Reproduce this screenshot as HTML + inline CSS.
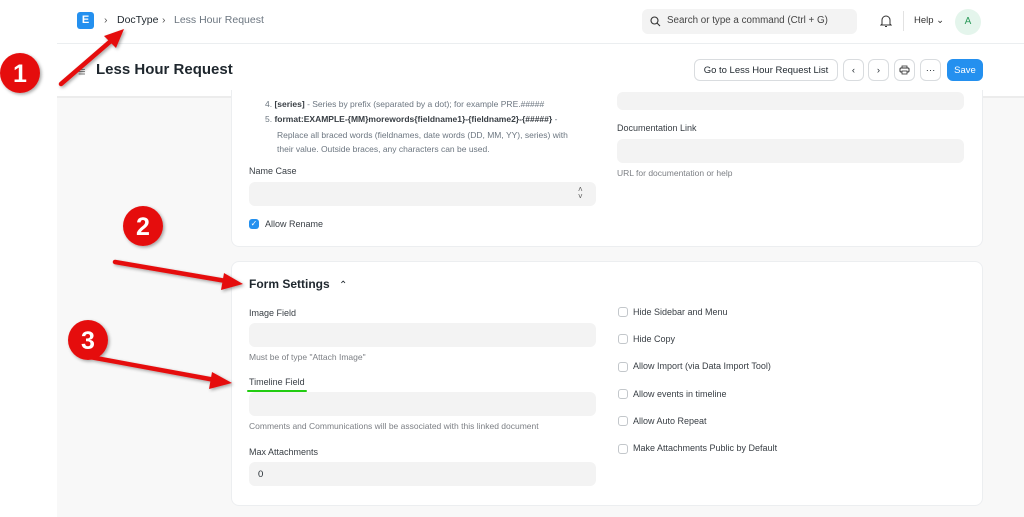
<!DOCTYPE html>
<html><head><meta charset="utf-8"><style>
*{box-sizing:border-box;margin:0;padding:0}
body{width:1024px;height:517px;overflow:hidden;background:#fff;font-family:"Liberation Sans",sans-serif;position:relative;color:#1f272e}
.abs{position:absolute}
.gray{left:57px;top:97px;width:967px;height:420px;background:#f8f8f8}
.hdr{left:57px;top:0;width:967px;height:44px;border-bottom:1px solid #ebeef0;background:#fff}
.card{background:#fff;border-radius:8px;border:1px solid #eceef0;position:absolute}
.lbl{font-size:9px;color:#383e44;position:absolute}
.inp{background:#f3f3f3;border-radius:6px;position:absolute}
.hint{font-size:8.5px;color:#7c7f84;position:absolute}
.cb{position:absolute;width:10px;height:10px;border:1px solid #c3c7cb;border-radius:3px;background:#fff}
.btn{position:absolute;top:59px;height:22px;border:1px solid #d9dcdf;border-radius:6px;background:#fff;font-size:9.5px;display:flex;align-items:center;justify-content:center;color:#1f272e}
</style></head><body>
<div class="abs gray"></div>
<div class="abs hdr"></div>
<div class="abs" style="left:77px;top:12px;width:17px;height:17px;background:#2490ef;border-radius:3px;color:#fff;font-weight:bold;font-size:11px;text-align:center;line-height:17px">E</div>
<div class="abs" style="left:104px;top:14px;font-size:10.5px;color:#555">›</div>
<div class="abs" style="left:117px;top:14px;font-size:10.5px;color:#1f272e">DocType</div>
<div class="abs" style="left:162px;top:14px;font-size:10.5px;color:#555">›</div>
<div class="abs" style="left:174px;top:14px;font-size:10.5px;color:#6c7680">Less Hour Request</div>
<div class="abs" style="left:642px;top:9px;width:215px;height:25px;background:#f3f3f3;border-radius:6px"></div>
<svg class="abs" style="left:650px;top:16px" width="11" height="11" viewBox="0 0 11 11"><circle cx="4.5" cy="4.5" r="3.5" fill="none" stroke="#333" stroke-width="1.1"/><path d="M7 7l3 3" stroke="#333" stroke-width="1.1"/></svg>
<div class="abs" style="left:667px;top:15px;font-size:9.8px;color:#444">Search or type a command (Ctrl + G)</div>
<svg class="abs" style="left:880px;top:14px" width="12" height="14" viewBox="0 0 12 14"><path d="M2 10V6a4 4 0 018 0v4l1 1H1z M5 12.5h2" fill="none" stroke="#333" stroke-width="1"/></svg>
<div class="abs" style="left:903px;top:11px;width:1px;height:20px;background:#e2e2e2"></div>
<div class="abs" style="left:914px;top:15px;font-size:9.5px;color:#333">Help ⌄</div>
<div class="abs" style="left:955px;top:9px;width:26px;height:26px;border-radius:50%;background:#e4f5ec;color:#2b9a5a;font-size:10px;text-align:center;line-height:26px">A</div>
<div class="abs" style="left:78px;top:64px;font-size:13px;color:#777">≡</div>
<div class="abs" style="left:96px;top:61px;font-size:15px;font-weight:bold;color:#1f272e">Less Hour Request</div>
<div class="btn" style="left:694px;width:144px">Go to Less Hour Request List</div>
<div class="btn" style="left:843px;width:21px">‹</div>
<div class="btn" style="left:868px;width:21px">›</div>
<div class="btn" style="left:894px;width:21px"><svg width="11" height="10" viewBox="0 0 11 10"><rect x="1" y="3" width="9" height="4" rx="1" fill="none" stroke="#333"/><rect x="3" y="1" width="5" height="2" fill="none" stroke="#333" stroke-width=".8"/><rect x="3" y="6" width="5" height="3" fill="#fff" stroke="#333" stroke-width=".8"/></svg></div>
<div class="btn" style="left:920px;width:21px">···</div>
<div class="btn" style="left:947px;width:36px;background:#2490ef;border-color:#2490ef;color:#fff">Save</div>
<div class="abs" style="left:57px;top:96px;width:967px;height:2px;background:#ececec"></div>

<div class="card" style="left:231px;top:90px;width:752px;height:157px;border-top:none;border-radius:0 0 8px 8px"></div>
<div class="abs" style="left:265px;top:99px;font-size:8.5px;color:#6c7680">4. <b style="color:#383e44">[series]</b> - Series by prefix (separated by a dot); for example PRE.#####</div>
<div class="abs" style="left:265px;top:114px;font-size:8.5px;color:#6c7680">5. <b style="color:#383e44">format:EXAMPLE-{MM}morewords{fieldname1}-{fieldname2}-{#####}</b> -</div>
<div class="abs" style="left:277px;top:128px;font-size:8.5px;color:#6c7680;line-height:14px">Replace all braced words (fieldnames, date words (DD, MM, YY), series) with<br>their value. Outside braces, any characters can be used.</div>
<div class="lbl" style="left:249px;top:166px">Name Case</div>
<div class="inp" style="left:249px;top:182px;width:347px;height:24px"></div>
<div class="abs" style="left:578px;top:186px;font-size:8px;color:#555;line-height:7px">˄<br>˅</div>
<div class="abs" style="left:249px;top:219px;width:10px;height:10px;border-radius:3px;background:#2490ef;color:#fff;font-size:8px;text-align:center;line-height:10px">✓</div>
<div class="lbl" style="left:265px;top:219px">Allow Rename</div>
<div class="inp" style="left:617px;top:92px;width:347px;height:18px"></div>
<div class="lbl" style="left:617px;top:123px">Documentation Link</div>
<div class="inp" style="left:617px;top:139px;width:347px;height:24px"></div>
<div class="hint" style="left:617px;top:168px">URL for documentation or help</div>

<div class="card" style="left:231px;top:261px;width:752px;height:245px"></div>
<div class="abs" style="left:249px;top:277px;font-size:12px;font-weight:bold;color:#1f272e">Form Settings <span style="font-weight:normal;font-size:10px;margin-left:6px">⌃</span></div>
<div class="lbl" style="left:249px;top:308px">Image Field</div>
<div class="inp" style="left:249px;top:323px;width:347px;height:24px"></div>
<div class="hint" style="left:249px;top:352px">Must be of type "Attach Image"</div>
<div class="lbl" style="left:249px;top:377px">Timeline Field</div>
<div class="abs" style="left:247px;top:390px;width:60px;height:2px;background:#22cc11;border-radius:1px"></div>
<div class="inp" style="left:249px;top:392px;width:347px;height:24px"></div>
<div class="hint" style="left:249px;top:421px">Comments and Communications will be associated with this linked document</div>
<div class="lbl" style="left:249px;top:447px">Max Attachments</div>
<div class="inp" style="left:249px;top:462px;width:347px;height:24px;font-size:9.5px;padding:7px 9px">0</div>

<div class="cb" style="left:618px;top:307px"></div><div class="lbl" style="left:633px;top:307px">Hide Sidebar and Menu</div>
<div class="cb" style="left:618px;top:334px"></div><div class="lbl" style="left:633px;top:334px">Hide Copy</div>
<div class="cb" style="left:618px;top:362px"></div><div class="lbl" style="left:633px;top:361px">Allow Import (via Data Import Tool)</div>
<div class="cb" style="left:618px;top:389px"></div><div class="lbl" style="left:633px;top:389px">Allow events in timeline</div>
<div class="cb" style="left:618px;top:416px"></div><div class="lbl" style="left:633px;top:416px">Allow Auto Repeat</div>
<div class="cb" style="left:618px;top:444px"></div><div class="lbl" style="left:633px;top:443px">Make Attachments Public by Default</div>

<svg class="abs" style="left:0;top:0" width="260" height="400" viewBox="0 0 260 400">
<defs><filter id="s"><feDropShadow dx="1.5" dy="1.5" stdDeviation="1.5" flood-opacity=".35"/></filter></defs>
<g filter="url(#s)" fill="#e50d0d" stroke="#e50d0d">
<line x1="61" y1="84" x2="112" y2="40" stroke-width="4.5" stroke-linecap="round"/>
<polygon points="124,29 104,36 116,48" stroke="none"/>
<line x1="115" y1="262" x2="226" y2="281" stroke-width="4.5" stroke-linecap="round"/>
<polygon points="243,284 224,273 221,290" stroke="none"/>
<line x1="90" y1="357" x2="215" y2="380" stroke-width="4.5" stroke-linecap="round"/>
<polygon points="232,383 212,372 209,389" stroke="none"/>
<circle cx="20" cy="73" r="20" stroke="none"/>
<circle cx="143" cy="226" r="20" stroke="none"/>
<circle cx="88" cy="340" r="20" stroke="none"/>
</g>
<g fill="#fff" font-family="Liberation Sans" font-weight="bold" font-size="25" text-anchor="middle">
<text x="20" y="82">1</text><text x="143" y="235">2</text><text x="88" y="349">3</text></g>
</svg>
</body></html>
